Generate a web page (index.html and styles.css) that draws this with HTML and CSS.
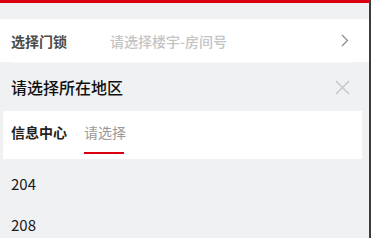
FILE: index.html
```html
<!DOCTYPE html>
<html lang="zh-CN">
<head>
<meta charset="utf-8">
<title>选择门锁</title>
<link rel="stylesheet" href="styles.css">
</head>
<body>
<div class="app">
  <div class="topbar"></div>
  <div class="spacer"></div>
  <div class="row">
    <span class="label">选择门锁</span>
    <span class="placeholder">请选择楼宇-房间号</span>
    <svg class="chevron" width="8" height="13" viewBox="0 0 8 13"><path d="M1 1 L6.5 6.5 L1 12" fill="none" stroke="#8a8a8a" stroke-width="1.2"/></svg>
  </div>
  <div class="sheet">
    <div class="sheet-head">
      <span class="title">请选择所在地区</span>
      <svg class="close" width="15" height="15" viewBox="0 0 15 15"><path d="M1 1 L14 14 M14 1 L1 14" stroke="#c9c9c9" stroke-width="1.6"/></svg>
    </div>
    <div class="tabs">
      <span class="tab tab-done">信息中心</span>
      <span class="tab tab-active">请选择</span>
    </div>
    <ul class="list">
      <li>204</li>
      <li>208</li>
    </ul>
  </div>
</div>
</body>
</html>
```

FILE: styles.css
```css
* { box-sizing: border-box; }
html, body { margin: 0; padding: 0; }
body {
  background: #f0f1f3;
  font-family: "Noto Sans CJK SC", "Noto Sans", sans-serif;
  width: 371px;
  height: 238px;
  overflow: hidden;
}
.app {
  width: 371px;
  height: 238px;
  border-right: 2px solid #3c3c3c;
  background: #f0f1f3;
}
.topbar { height: 3px; background: #d9000f; }
.spacer { height: 16px; }
.row {
  height: 43px;
  background: #fff;
  display: flex;
  align-items: center;
  padding: 0 20px 0 11px;
  position: relative;
}
.row::after {
  content: "";
  position: absolute;
  left: 11px;
  right: 16px;
  bottom: -1px;
  height: 1px;
  background: #f8f8f9;
}
.label {
  width: 99px;
  font-size: 14px;
  font-weight: 700;
  color: #4a4a4a;
}
.placeholder {
  font-size: 14px;
  color: #c4c4c4;
  font-weight: 500;
}
.chevron { margin-left: auto; }
.sheet { margin-top: 1px; }
.sheet-head {
  height: 48px;
  display: flex;
  align-items: center;
  padding: 0 19px 0 11px;
}
.title {
  font-size: 16px;
  color: #111;
  font-weight: 500;
}
.close { margin-left: auto; }
.tabs {
  height: 48px;
  margin: 0 7px 0 3px;
  background: #fff;
  display: flex;
  gap: 17px;
  padding-left: 8px;
}
.tab {
  position: relative;
  height: 48px;
  padding-top: 11px;
  line-height: 20px;
  font-size: 14px;
}
.tab-done { color: #222; font-weight: 700; }
.tab-active { color: #9a9a9a; }
.tab-active::after {
  content: "";
  position: absolute;
  left: 0;
  width: 40px;
  bottom: 5px;
  height: 2px;
  background: #d9000f;
}
.list {
  list-style: none;
  margin: 0;
  padding: 4px 0 0 11px;
}
.list li {
  height: 41px;
  line-height: 41px;
  font-size: 15px;
  color: #1a1a1a;
}
```
